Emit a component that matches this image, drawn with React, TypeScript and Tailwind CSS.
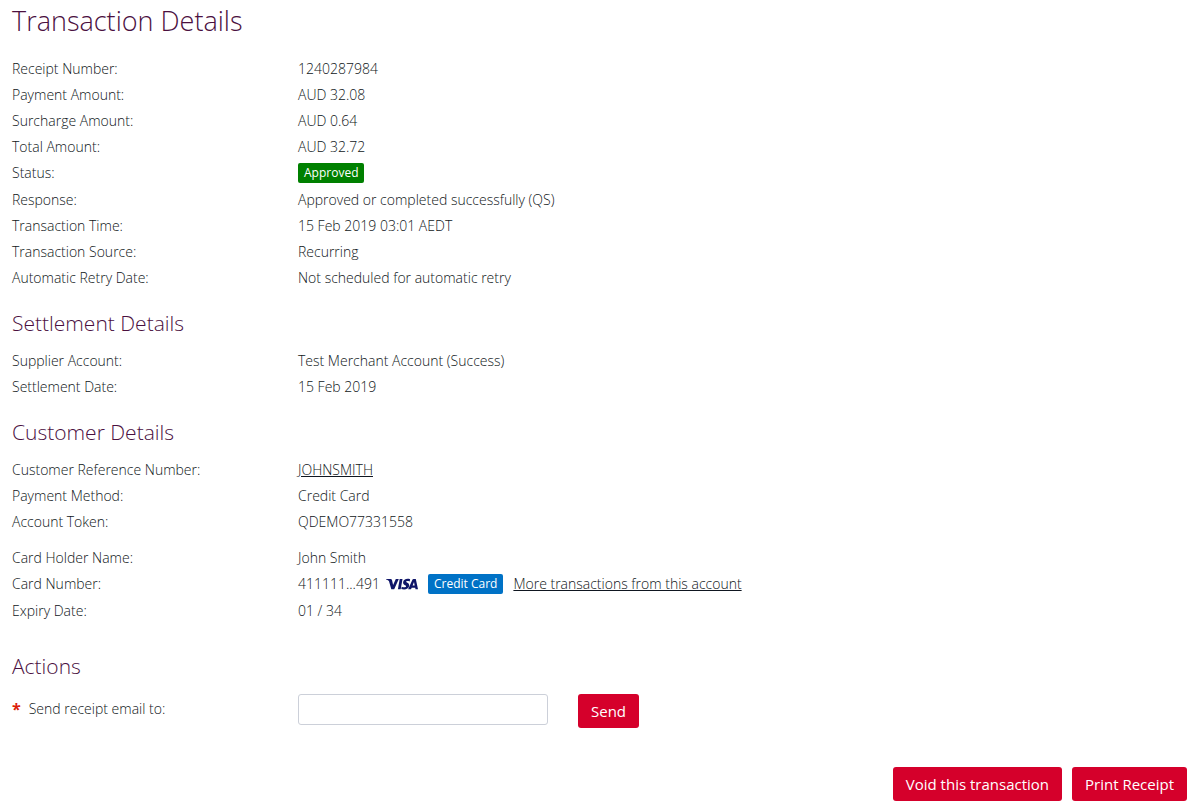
import React from 'react';
import clsx from 'clsx';

interface RowProps {
  label: string;
  tall?: boolean;
  children: React.ReactNode;
}

const Row = ({ label, tall, children }: RowProps) => (
  <div className={clsx('flex min-h-[26px] items-center', tall && 'mb-px')}>
    <dt className="w-[286px] shrink-0">{label}</dt>
    <dd className="flex flex-wrap items-center">{children}</dd>
  </div>
);

const SectionTitle = ({ children }: { children: React.ReactNode }) => (
  <h2 className="mb-2 text-[21px] leading-[33px] font-light text-[#4b103f]">{children}</h2>
);

const Badge = ({ className, children }: { className: string; children: React.ReactNode }) => (
  <span className={clsx('rounded-xs px-[6px] text-[12px] leading-5 font-normal text-white', className)}>
    {children}
  </span>
);

const Button = ({ type = 'button', children }: { type?: 'button' | 'submit'; children: React.ReactNode }) => (
  <button
    type={type}
    className="h-[34px] cursor-pointer rounded-[3px] bg-[#d5002b] px-[13px] text-[15px] leading-6 font-normal text-white"
  >
    {children}
  </button>
);

const VisaLogo = () => (
  <svg viewBox="0 0 32 12" className="mr-[10px] ml-[6px] h-3 w-8" role="img" aria-label="Visa">
    <g fill="#0e1468">
      <path d="M0 1h4.6c.7 0 1.2.3 1.4 1l1.1 5L9.8 1h3L8.2 11.2H5.3L3 3.3C2.7 2.4 1.4 1.8 0 1.4z" />
      <path d="M13.7 1h2.8l-1.8 10.2h-2.8z" />
      <path d="M24.1 1.3l-.4 2.1c-2-.8-3.5-.6-3.6.2-.1 1.1 3.4 1.3 3.1 4.1-.3 2.7-2.8 3.7-5.1 3.7-1.2 0-2.2-.2-2.8-.5l.4-2.2c1.7.8 4.3.9 4.4-.4.1-1.2-3.2-1.3-3-4.1.2-2.7 3.8-4.1 7-2.9z" />
      <path fillRule="evenodd" d="M27.5 1h2.3L32 11.2h-2.5l-.3-1.5h-3.5l-.7 1.5h-2.9l4.2-9.3c.2-.6.6-.9 1.2-.9zm.5 2.9l-1.4 3.7h2.1z" />
    </g>
  </svg>
);

const App = () => {
  return (
    <main className="bg-white px-3 pb-2 font-['Open_Sans','Noto_Sans',sans-serif] text-[14px] leading-5 font-light text-[#0f1620]">
      <h1 className="mb-[14px] text-[27px] leading-[42px] font-light text-[#4b103f]">Transaction Details</h1>
      <dl>
        <Row label="Receipt Number:">1240287984</Row>
        <Row label="Payment Amount:">AUD 32.08</Row>
        <Row label="Surcharge Amount:">AUD 0.64</Row>
        <Row label="Total Amount:">AUD 32.72</Row>
        <Row label="Status:" tall>
          <Badge className="bg-[#008000]">Approved</Badge>
        </Row>
        <Row label="Response:">Approved or completed successfully (QS)</Row>
        <Row label="Transaction Time:">15 Feb 2019 03:01 AEDT</Row>
        <Row label="Transaction Source:">Recurring</Row>
        <Row label="Automatic Retry Date:">Not scheduled for automatic retry</Row>
      </dl>

      <section className="mt-4">
        <SectionTitle>Settlement Details</SectionTitle>
        <dl>
          <Row label="Supplier Account:">Test Merchant Account (Success)</Row>
          <Row label="Settlement Date:">15 Feb 2019</Row>
        </dl>
      </section>

      <section className="mt-4">
        <SectionTitle>Customer Details</SectionTitle>
        <dl>
          <Row label="Customer Reference Number:">
            <a href="#customer" className="underline">JOHNSMITH</a>
          </Row>
          <Row label="Payment Method:">Credit Card</Row>
          <Row label="Account Token:">QDEMO77331558</Row>
        </dl>
        <dl className="mt-[10px]">
          <Row label="Card Holder Name:">John Smith</Row>
          <Row label="Card Number:" tall>
            411111...491
            <VisaLogo />
            <Badge className="mr-[10px] bg-[#0072c6]">Credit Card</Badge>
            <a href="#transactions" className="underline">More transactions from this account</a>
          </Row>
          <Row label="Expiry Date:">01 / 34</Row>
        </dl>
      </section>

      <section className="mt-[26px]">
        <SectionTitle>Actions</SectionTitle>
        <form className="mt-[11px] flex items-start" onSubmit={(e) => e.preventDefault()}>
          <label htmlFor="receipt-email" className="flex w-[286px] shrink-0 items-center gap-2 leading-[30px]">
            <span className="text-[16px] leading-5 font-bold text-[#dc1e0a]">*</span>
            Send receipt email to:
          </label>
          <input
            id="receipt-email"
            type="email"
            required
            className="mr-[30px] h-[31px] w-[250px] rounded-[3px] border border-[#ccd0d9] bg-white px-2 outline-none"
          />
          <Button type="submit">Send</Button>
        </form>
      </section>

      <div className="mt-[39px] flex justify-end gap-[10px]">
        <Button>Void this transaction</Button>
        <Button>Print Receipt</Button>
      </div>
    </main>
  );
};

export default App;
